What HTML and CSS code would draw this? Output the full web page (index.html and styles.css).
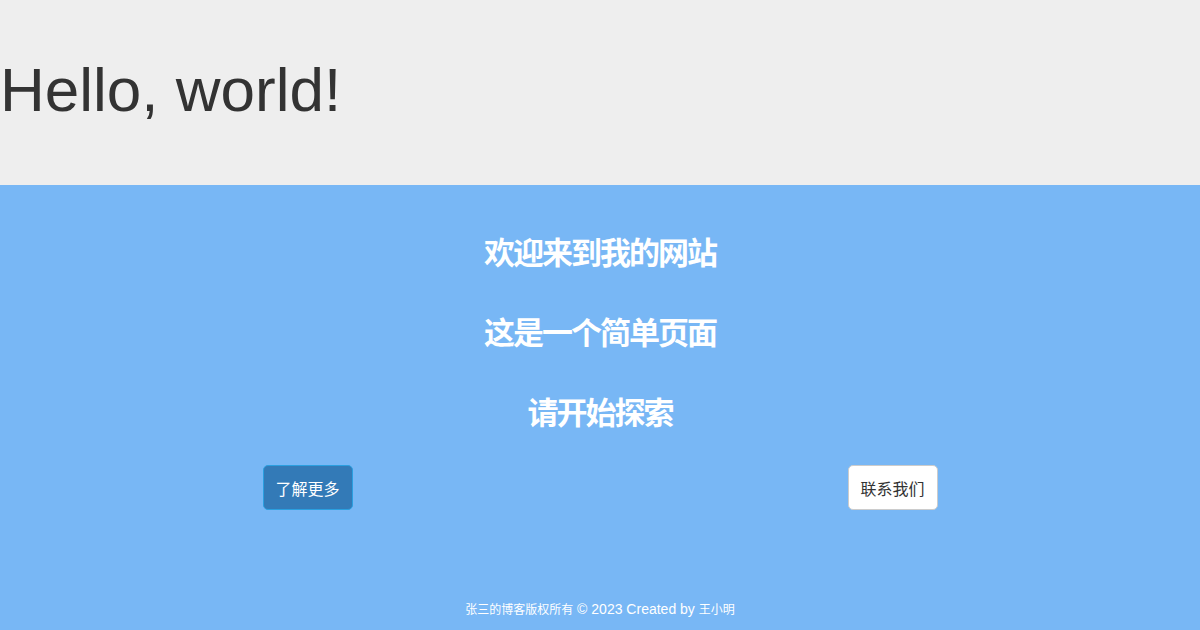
FILE: index.html
```html
<!DOCTYPE html>
<html lang="zh-CN">
<head>
<meta charset="utf-8">
<title>Hello, world!</title>
<link rel="stylesheet" href="styles.css">
</head>
<body>
<header class="jumbotron">
  <h1 class="hello">Hello, world!</h1>
</header>
<main class="hero">
  <div class="titles">
    <h2 class="title">欢迎来到我的网站</h2>
    <h2 class="title">这是一个简单页面</h2>
    <h2 class="title">请开始探索</h2>
  </div>
  <div class="container">
    <div class="col"><a class="btn btn-primary" href="#">了解更多</a></div>
    <div class="col"><a class="btn btn-default" href="#">联系我们</a></div>
  </div>
  <footer class="footer"><span class="cjk">张三的博客版权所有</span> © 2023 Created by <span class="cjk">王小明</span></footer>
</main>
</body>
</html>
```
FILE: styles.css
```css
* { box-sizing: border-box; }
html, body { margin: 0; padding: 0; }
body {
  font-family: "Liberation Sans", "Noto Sans CJK SC", sans-serif;
  color: #333;
  width: 1200px;
  height: 630px;
  overflow: hidden;
  background: #78b7f5;
}
.jumbotron {
  background: #eee;
  height: 185px;
  padding-top: 56px;
}
.hello {
  margin: 0;
  font-size: 62px;
  font-weight: 400;
  line-height: 1.1;
  color: #333;
}
.hero {
  height: 445px;
  display: flex;
  flex-direction: column;
  align-items: center;
}
.titles {
  display: flex;
  flex-direction: column;
  align-items: center;
  gap: 40px;
  margin-top: 49px;
}
.title {
  margin: 0;
  height: 40px;
  line-height: 40px;
  font-size: 31px;
  font-weight: 700;
  color: #fff;
  letter-spacing: -2px;
}
.container {
  width: 1170px;
  display: flex;
  margin-top: 31px;
}
.col {
  flex: 1;
  display: flex;
  justify-content: center;
}
.btn {
  display: inline-flex;
  align-items: center;
  justify-content: center;
  height: 45px;
  padding: 0 12px;
  font-size: 16px;
  border-radius: 5px;
  text-decoration: none;
  border: 1px solid transparent;
  width: 90px;
}
.btn-primary {
  background: #337ab7;
  border-color: #2a9fe0;
  color: #fff;
}
.btn-default {
  background: #fff;
  border-color: #ccc;
  color: #333;
}
.footer {
  margin-top: auto;
  margin-bottom: 10px;
  font-size: 14px;
  line-height: 20px;
  color: #fff;
}
.cjk { font-size: 12px; }
```
